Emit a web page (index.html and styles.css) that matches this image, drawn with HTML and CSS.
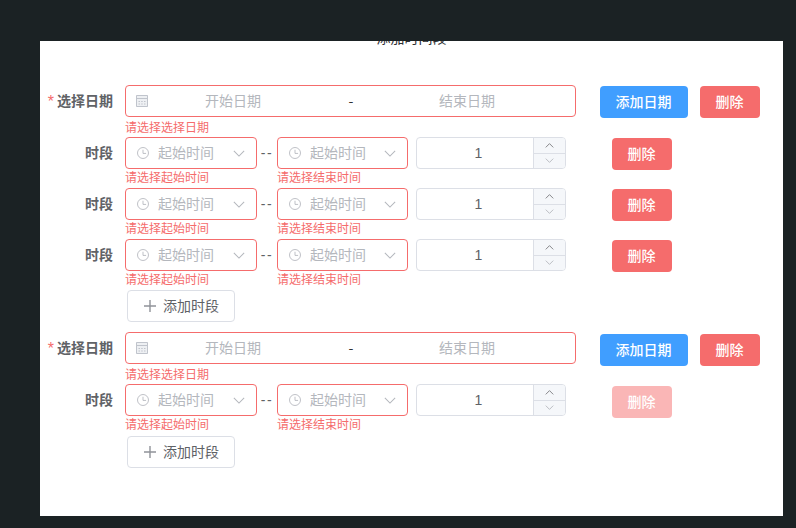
FILE: index.html
```html
<!DOCTYPE html>
<html lang="zh">
<head>
<meta charset="utf-8">
<title>添加时段</title>
<link rel="stylesheet" href="styles.css">
</head>
<body>
<svg class="defs" width="0" height="0" aria-hidden="true">
  <symbol id="clock" viewBox="0 0 14 14"><circle cx="7" cy="7" r="6.4" fill="none" stroke="currentColor"/><path d="M7 3.2V7.5H10.6" fill="none" stroke="currentColor"/></symbol>
  <symbol id="chev" viewBox="0 0 14 8"><path d="M1 1L7 7L13 1" fill="none" stroke="currentColor" stroke-width="1.2"/></symbol>
  <symbol id="cal" viewBox="0 0 12 12"><path d="M0 0H12V12H0Z" fill="#eef0f3"/><path d="M.5 .5H11.5V11.5H.5Z" fill="none" stroke="currentColor"/><path d="M1 3H11V4H1Z" fill="currentColor"/><path d="M2.5 6H4V7H2.5ZM5.2 6H6.7V7H5.2ZM8 6H9.5V7H8ZM2.5 8.5H4V9.5H2.5ZM5.2 8.5H6.7V9.5H5.2ZM8 8.5H9.5V9.5H8Z" fill="currentColor"/></symbol>
  <symbol id="plus" viewBox="0 0 12 12"><path d="M6 0V12M0 6H12" fill="none" stroke="currentColor" stroke-width="1.4"/></symbol>
</svg>
<main class="dialog">
  <h1 class="title">添加时间段</h1>
  <form class="form">
    <section class="group">
      <div class="row row-date">
        <label class="label"><span class="req">*</span>选择日期</label>
        <div class="field field-range">
          <div class="box range"><svg class="ic-cal"><use href="#cal"/></svg><span class="rp">开始日期</span><span class="rsep">-</span><span class="rp">结束日期</span></div>
          <p class="err">请选择选择日期</p>
        </div>
        <button type="button" class="btn blue first">添加日期</button>
        <button type="button" class="btn red del-date">删除</button>
      </div>
      <div class="row row-time">
        <label class="label">时段</label>
        <div class="field f1"><div class="box sel"><svg class="ic-clock"><use href="#clock"/></svg><span class="ph">起始时间</span><svg class="ic-chev"><use href="#chev"/></svg></div><p class="err">请选择起始时间</p></div>
        <span class="dash">--</span>
        <div class="field f2"><div class="box sel"><svg class="ic-clock"><use href="#clock"/></svg><span class="ph">起始时间</span><svg class="ic-chev"><use href="#chev"/></svg></div><p class="err">请选择结束时间</p></div>
        <div class="num"><span class="val">1</span><div class="steps"><span class="step"><svg class="ic-up"><use href="#chev"/></svg></span><span class="step"><svg class="ic-down"><use href="#chev"/></svg></span></div></div>
        <button type="button" class="btn red del-time">删除</button>
      </div>
      <div class="row row-time">
        <label class="label">时段</label>
        <div class="field f1"><div class="box sel"><svg class="ic-clock"><use href="#clock"/></svg><span class="ph">起始时间</span><svg class="ic-chev"><use href="#chev"/></svg></div><p class="err">请选择起始时间</p></div>
        <span class="dash">--</span>
        <div class="field f2"><div class="box sel"><svg class="ic-clock"><use href="#clock"/></svg><span class="ph">起始时间</span><svg class="ic-chev"><use href="#chev"/></svg></div><p class="err">请选择结束时间</p></div>
        <div class="num"><span class="val">1</span><div class="steps"><span class="step"><svg class="ic-up"><use href="#chev"/></svg></span><span class="step"><svg class="ic-down"><use href="#chev"/></svg></span></div></div>
        <button type="button" class="btn red del-time">删除</button>
      </div>
      <div class="row row-time">
        <label class="label">时段</label>
        <div class="field f1"><div class="box sel"><svg class="ic-clock"><use href="#clock"/></svg><span class="ph">起始时间</span><svg class="ic-chev"><use href="#chev"/></svg></div><p class="err">请选择起始时间</p></div>
        <span class="dash">--</span>
        <div class="field f2"><div class="box sel"><svg class="ic-clock"><use href="#clock"/></svg><span class="ph">起始时间</span><svg class="ic-chev"><use href="#chev"/></svg></div><p class="err">请选择结束时间</p></div>
        <div class="num"><span class="val">1</span><div class="steps"><span class="step"><svg class="ic-up"><use href="#chev"/></svg></span><span class="step"><svg class="ic-down"><use href="#chev"/></svg></span></div></div>
        <button type="button" class="btn red del-time">删除</button>
      </div>
      <button type="button" class="add"><svg class="ic-plus"><use href="#plus"/></svg>添加时段</button>
    </section>
    <section class="group group-next">
      <div class="row row-date">
        <label class="label"><span class="req">*</span>选择日期</label>
        <div class="field field-range">
          <div class="box range"><svg class="ic-cal"><use href="#cal"/></svg><span class="rp">开始日期</span><span class="rsep">-</span><span class="rp">结束日期</span></div>
          <p class="err">请选择选择日期</p>
        </div>
        <button type="button" class="btn blue first">添加日期</button>
        <button type="button" class="btn red del-date">删除</button>
      </div>
      <div class="row row-time last">
        <label class="label">时段</label>
        <div class="field f1"><div class="box sel"><svg class="ic-clock"><use href="#clock"/></svg><span class="ph">起始时间</span><svg class="ic-chev"><use href="#chev"/></svg></div><p class="err">请选择起始时间</p></div>
        <span class="dash">--</span>
        <div class="field f2"><div class="box sel"><svg class="ic-clock"><use href="#clock"/></svg><span class="ph">起始时间</span><svg class="ic-chev"><use href="#chev"/></svg></div><p class="err">请选择结束时间</p></div>
        <div class="num"><span class="val">1</span><div class="steps"><span class="step"><svg class="ic-up"><use href="#chev"/></svg></span><span class="step"><svg class="ic-down"><use href="#chev"/></svg></span></div></div>
        <button type="button" class="btn red del-time off">删除</button>
      </div>
      <button type="button" class="add"><svg class="ic-plus"><use href="#plus"/></svg>添加时段</button>
    </section>
  </form>
</main>
</body>
</html>
```
FILE: styles.css
```css
* { box-sizing: border-box; }
html, body { margin: 0; height: 100%; }
body {
  background: #1b2224;
  padding: 41px 13px 12px 40px;
  font-family: "Noto Sans CJK SC", "Liberation Sans", sans-serif;
  font-size: 14px;
  color: #606266;
  overflow: hidden;
}
.defs { position: absolute; }
.dialog { background: #fff; height: 475px; overflow: hidden; }
.title {
  margin: -16px 0 0;
  height: 24px;
  line-height: 24px;
  text-align: center;
  font-size: 14px;
  font-weight: 400;
  color: #303133;
}
.form { padding-top: 36px; }
.group { margin-bottom: 10px; }
.row { display: flex; align-items: flex-start; }
.row-date { height: 52px; }
.row-time { height: 51px; }
.row-time.last { height: 52px; }
.label {
  width: 85px;
  height: 32px;
  padding-right: 12px;
  flex: none;
  line-height: 30px;
  text-align: right;
  font-weight: 700;
  white-space: nowrap;
}
.req {
  color: #f56c6c;
  font-family: "Liberation Sans", sans-serif;
  font-size: 16px;
  line-height: 1;
  font-weight: 400;
  margin-right: 3px;
  vertical-align: -1px;
}
.field { flex: none; }
.field-range { width: 451px; }
.f1 { width: 132px; }
.f2 { width: 131px; }
.box {
  height: 32px;
  padding-bottom: 2px;
  border: 1px solid #f56c6c;
  border-radius: 4px;
  display: flex;
  align-items: center;
  background: #fff;
}
.err {
  margin: 0;
  font-size: 12px;
  line-height: 19px;
  color: #f56c6c;
  white-space: nowrap;
}
.row-time .err { line-height: 15px; }
.range { padding-left: 10px; }
.ic-cal { width: 12px; height: 12px; color: #c0c4cc; flex: none; margin-right: 5px; position: relative; top: 1px; }
.rp { width: 160px; text-align: center; color: #b4b7bd; flex: none; }
.rsep { width: 74px; padding-left: 2px; text-align: center; color: #303133; flex: none; }
.sel { padding-left: 11px; }
.ic-clock { width: 12px; height: 12px; color: #b4b7bd; flex: none; position: relative; top: 1px; }
.ph { margin-left: 9px; color: #b4b7bd; flex: 1; white-space: nowrap; }
.ic-chev { width: 12px; height: 7px; color: #b4b7bd; flex: none; margin-right: 11px; position: relative; top: 1px; }
.dash {
  width: 20px;
  flex: none;
  height: 32px;
  line-height: 32px;
  text-align: center;
  color: #606266;
  font-family: "Liberation Sans", sans-serif;
  letter-spacing: 1.5px;
}
.num {
  flex: none;
  width: 150px;
  height: 32px;
  margin-left: 8px;
  border: 1px solid #dcdfe6;
  border-radius: 4px;
  display: flex;
  overflow: hidden;
}
.val {
  flex: 1;
  padding-left: 7px;
  text-align: center;
  line-height: 31px;
  font-family: "Liberation Sans", sans-serif;
  font-size: 14px;
}
.steps { width: 32px; border-left: 1px solid #dcdfe6; background: #f5f7fa; display: flex; flex-direction: column; }
.step { flex: 1; display: flex; align-items: center; justify-content: center; }
.step + .step { border-top: 1px solid #dcdfe6; }
.ic-up { width: 9px; height: 5px; color: #606266; transform: rotate(180deg); }
.ic-down { width: 9px; height: 5px; color: #a8abb2; }
.btn {
  flex: none;
  height: 32px;
  margin-top: 1px;
  border: 0;
  border-radius: 4px;
  color: #fff;
  font: 500 14px "Noto Sans CJK SC", "Liberation Sans", sans-serif;
  padding: 0 1px 2px 0;
}
.group-next .btn { margin-top: 2px; }
.blue { background: #409eff; }
.red { background: #f56c6c; }
.first { width: 88px; margin-left: 24px; }
.del-date { width: 60px; margin-left: 12px; }
.del-time { width: 60px; margin-left: 46px; }
.off { background: #fab6b6; }
.add {
  display: flex;
  align-items: center;
  width: 108px;
  height: 32px;
  margin-left: 87px;
  padding: 0 0 2px 16px;
  background: #fff;
  border: 1px solid #dcdfe6;
  border-radius: 4px;
  color: #606266;
  font: 400 14px "Noto Sans CJK SC", "Liberation Sans", sans-serif;
}
.ic-plus { width: 12px; height: 12px; color: #909399; margin-right: 7px; flex: none; position: relative; top: 1px; }
```
